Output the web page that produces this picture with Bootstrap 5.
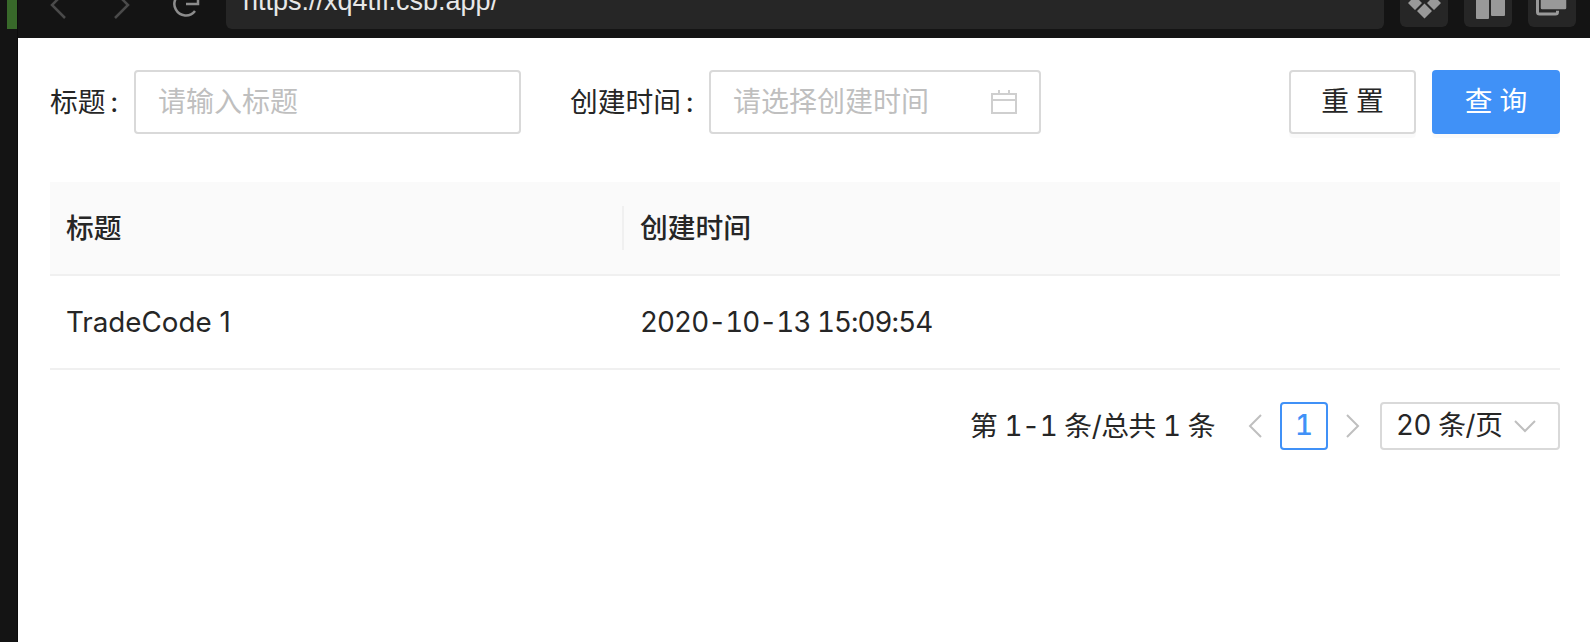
<!DOCTYPE html>
<html lang="en">
<head>
    <meta charset="UTF-8">
    <meta name="viewport" content="width=device-width, initial-scale=1.0">
    <title>TradeCode</title>
    <link href="https://cdn.jsdelivr.net/npm/bootstrap@5.3.0/dist/css/bootstrap.min.css" rel="stylesheet">
    <style>
        html, body { height: 100%; }
        body { background: #fff; color: #262626; font-family: Inter, "Noto Sans CJK SC", sans-serif; font-size: 27.75px; overflow: hidden; }
        .app-shell { height: 642px; }
        .side-strip { width: 18px; background: #141414; border-right: 1px solid #0c0c0c; }
        .side-green { width: 10px; height: 29px; margin-left: 7px; background: #38692a; }
        .browser-bar { height: 38px; background: #141414; overflow: hidden; }
        .nav-ico { height: 60px; margin-bottom: 9px; flex-shrink: 0; }
        .nav-back { width: 16px; margin-left: 32px; }
        .nav-forward { width: 16px; margin-left: 48px; }
        .nav-reload { width: 28px; margin-left: 42px; }
        .url-box { width: 1158px; height: 60px; margin-left: 26px; margin-bottom: 9px; padding-left: 17px; background: #262626; border-radius: 6px; color: #e8e8e8; font-size: 27px; line-height: 64px; font-family: "Liberation Sans", sans-serif; }
        .tool-box { width: 48px; height: 60px; margin-bottom: 11px; margin-left: 16px; background: #262626; border-radius: 6px; }
        .tool-box svg { display: block; }
        .search-row { padding: 32px 30px 0 32px; height: 144px; }
        .field-label { line-height: 64px; white-space: nowrap; flex-shrink: 0; word-spacing: -3px; }
        .title-label { width: 84px; }
        .time-label { width: 139px; margin-left: 49px; }
        .field-box { height: 64px; border: 2px solid #d9d9d9; border-radius: 4px; padding: 0 22px; color: #bfbfbf; font-size: 28px; }
        .title-box { width: 387px; }
        .time-box { width: 332px; }
        .btn-reset, .btn-query { height: 64px; border-radius: 4px; font-size: 27.75px; padding: 0; box-shadow: 0 4px 0 rgba(0,0,0,.02); letter-spacing: 7px; text-indent: 7px; }
        .btn-reset { width: 127px; border: 2px solid #d9d9d9; background: #fff; color: #262626; }
        .btn-query { width: 128px; border: 0; background: #4091f7; color: #fff; margin-left: 16px; }
        .data-wrap { padding: 0 30px 0 32px; }
        .data-table { width: 100%; margin: 0; table-layout: fixed; }
        .data-table th, .data-table td { padding: 2px 16px 0; vertical-align: middle; color: #262626; border-bottom: 2px solid #f0f0f0; }
        .data-table th { height: 93px; background: #fafafa; font-weight: 500; position: relative; }
        .data-table td { height: 94px; }
        .col-title { width: 574px; }
        .data-table th.col-title::after { content: ""; position: absolute; right: 0; top: 24px; height: 44px; width: 2px; background: #f0f0f0; }
        .date-cell { font-feature-settings: "tnum"; letter-spacing: -0.95px; }
        .pager-row { padding: 32px 30px 0 0; font-feature-settings: "tnum"; }
        .pager-row > * { height: 48px; }
        .pager-num { width: 48px; border: 2px solid #4091f7; border-radius: 4px; color: #4091f7; font-weight: 500; }
        .pager-size { width: 180px; margin-left: 2px; border: 2px solid #d9d9d9; border-radius: 4px; padding: 0 22px 0 14px; letter-spacing: -0.4px; }
        .pager-total { margin-right: 15px; line-height: 48px; letter-spacing: -0.4px; }
        .pager-arrow { width: 50px; }
    </style>
</head>
<body>
    <div class="app-shell d-flex">
        <div class="side-strip flex-shrink-0">
            <div class="side-green"></div>
        </div>
        <div class="flex-grow-1 d-flex flex-column">
            <div class="browser-bar d-flex align-items-end">
                <svg class="nav-ico nav-back" viewBox="0 0 16 60" fill="none" stroke="#4a4a4a" stroke-width="2.5"><path d="M15 23 L2 36 L15 49"/></svg>
                <svg class="nav-ico nav-forward" viewBox="0 0 16 60" fill="none" stroke="#4a4a4a" stroke-width="2.5"><path d="M1 23 L14 36 L1 49"/></svg>
                <svg class="nav-ico nav-reload" viewBox="0 0 28 60" fill="none" stroke="#8c8c8c" stroke-width="2.5"><path d="M23 42 A11.5 11.5 0 1 1 13 23.5 M14 35 H26 V25"/></svg>
                <div class="url-box flex-shrink-0">https://xq4tfl.csb.app/</div>
                <div class="tool-box flex-shrink-0">
                    <svg width="48" height="60" viewBox="0 0 48 60" fill="#999"><path d="M15 29 l7 7 -7 7 -7 -7z M34 29 l7 7 -7 7 -7 -7z M24.5 36.5 l7.5 7.5 -7.5 7.5 -7.5 -7.5z"/></svg>
                </div>
                <div class="tool-box flex-shrink-0">
                    <svg width="48" height="60" viewBox="0 0 48 60" fill="#999"><rect x="12" y="20" width="13" height="32" rx="1"/><rect x="27" y="20" width="14" height="29" rx="1"/></svg>
                </div>
                <div class="tool-box flex-shrink-0">
                    <svg width="48" height="60" viewBox="0 0 48 60" fill="none"><rect x="9.5" y="20" width="20" height="27" rx="2" stroke="#999" stroke-width="3"/><rect x="12" y="20" width="27" height="23" rx="2" fill="#999" stroke="#262626" stroke-width="1.5"/></svg>
                </div>
            </div>

            <div class="search-row d-flex align-items-start">
                <span class="field-label title-label">标题 :</span>
                <div class="field-box title-box d-flex align-items-center">请输入标题</div>
                <span class="field-label time-label">创建时间 :</span>
                <div class="field-box time-box d-flex align-items-center justify-content-between">
                    <span>请选择创建时间</span>
                    <svg width="26" height="24" viewBox="0 0 26 24" fill="none" stroke="#cfcfcf" stroke-width="2"><path d="M1 4 H25 V23 H1 Z M1 10 H25 M8 0 V4 M18 0 V4"/></svg>
                </div>
                <div class="ms-auto d-flex">
                    <button type="button" class="btn btn-reset">重置</button>
                    <button type="button" class="btn btn-query">查询</button>
                </div>
            </div>

            <div class="data-wrap">
                <table class="table data-table">
                    <thead>
                        <tr><th class="col-title">标题</th><th>创建时间</th></tr>
                    </thead>
                    <tbody>
                        <tr><td>TradeCode 1</td><td class="date-cell">2020-10-13 15:09:54</td></tr>
                    </tbody>
                </table>
            </div>

            <div class="pager-row d-flex justify-content-end align-items-start">
                <span class="pager-total">第 1-1 条/总共 1 条</span>
                <span class="pager-arrow d-flex align-items-center justify-content-center">
                    <svg width="14" height="24" viewBox="0 0 14 24" fill="none" stroke="#bfbfbf" stroke-width="2"><path d="M13 1 L2 12 L13 23"/></svg>
                </span>
                <span class="pager-num d-flex align-items-center justify-content-center">1</span>
                <span class="pager-arrow d-flex align-items-center justify-content-center">
                    <svg width="14" height="24" viewBox="0 0 14 24" fill="none" stroke="#bfbfbf" stroke-width="2"><path d="M1 1 L12 12 L1 23"/></svg>
                </span>
                <div class="pager-size d-flex align-items-center justify-content-between">
                    <span>20 条/页</span>
                    <svg width="22" height="14" viewBox="0 0 22 14" fill="none" stroke="#bfbfbf" stroke-width="2"><path d="M1 2 L11 12 L21 2"/></svg>
                </div>
            </div>
        </div>
    </div>

    <script src="https://cdn.jsdelivr.net/npm/bootstrap@5.3.0/dist/js/bootstrap.bundle.min.js"></script>
</body>
</html>
